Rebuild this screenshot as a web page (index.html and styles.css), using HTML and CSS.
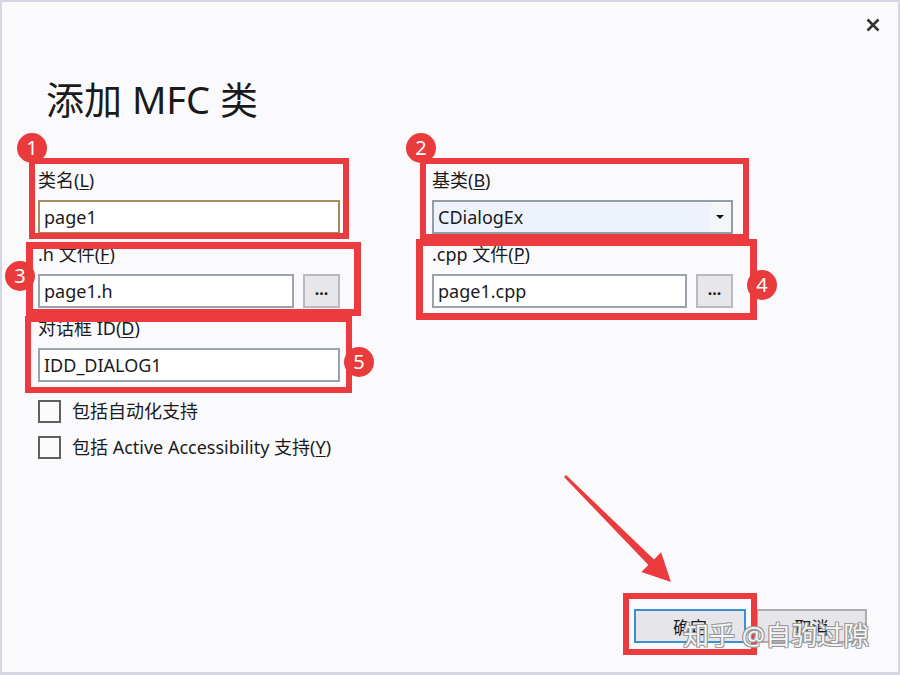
FILE: index.html
```html
<!DOCTYPE html>
<html lang="zh-CN">
<head>
    <meta charset="UTF-8">
    <title>添加 MFC 类</title>
    <link rel="stylesheet" href="styles.css">
</head>
<body>
    <div class="dialog">
        <div class="titlebar">
            <span class="close">
                <svg width="14" height="14" viewBox="0 0 14 14"><path d="M1.5 1.5 L12.5 12.5 M12.5 1.5 L1.5 12.5" stroke="#333" stroke-width="2.6" fill="none"/></svg>
            </span>
        </div>
        <h1 class="title">添加 MFC 类</h1>

        <div class="form">
            <div class="field">
                <label>类名(<u>L</u>)</label>
                <div class="input focused">page1</div>
            </div>
            <div class="field">
                <label>基类(<u>B</u>)</label>
                <div class="select">
                    <span class="select-value">CDialogEx</span>
                    <span class="select-arrow"></span>
                </div>
            </div>
            <div class="field">
                <label>.h 文件(<u>F</u>)</label>
                <div class="browse-row">
                    <div class="input">page1.h</div>
                    <div class="browse">...</div>
                </div>
            </div>
            <div class="field">
                <label>.cpp 文件(<u>P</u>)</label>
                <div class="browse-row">
                    <div class="input">page1.cpp</div>
                    <div class="browse">...</div>
                </div>
            </div>
            <div class="field">
                <label>对话框 ID(<u>D</u>)</label>
                <div class="input">IDD_DIALOG1</div>
            </div>
        </div>

        <div class="checks">
            <div class="check"><span class="box"></span><span>包括自动化支持</span></div>
            <div class="check"><span class="box"></span><span>包括 Active Accessibility 支持(<u>Y</u>)</span></div>
        </div>

        <div class="actions">
            <div class="btn primary">确定</div>
            <div class="btn cancel">取消</div>
        </div>

        <!-- annotations -->
        <div class="mark mark-1"></div>
        <div class="mark mark-2"></div>
        <div class="mark mark-3"></div>
        <div class="mark mark-4"></div>
        <div class="mark mark-5"></div>
        <div class="mark mark-6"></div>
        <div class="badge badge-1">1</div>
        <div class="badge badge-2">2</div>
        <div class="badge badge-3">3</div>
        <div class="badge badge-4">4</div>
        <div class="badge badge-5">5</div>
        <svg class="arrow" width="120" height="120" viewBox="0 0 120 120">
            <polygon points="4,7 6,5 94,89.4 101.1,82.3 111,112 81.3,102.1 88.4,95" fill="#ec3b3f"/>
        </svg>
        <div class="watermark">知乎 @自驹过隙</div>
    </div>
</body>
</html>
```

FILE: styles.css
```css
* {
    box-sizing: border-box;
}
body {
    margin: 0;
    background: #fafafc;
    font-family: "Noto Sans", "Noto Sans CJK SC", sans-serif;
    color: #1b1b1b;
}
.dialog {
    position: relative;
    width: 900px;
    height: 675px;
    border: 2px solid #d6d6e4;
    border-bottom-width: 3px;
    background: #fafafc;
    display: flex;
    flex-direction: column;
    padding: 0 30px 29px 36px;
}
.titlebar {
    height: 46px;
    display: flex;
    justify-content: flex-end;
    align-items: center;
    margin-right: -20px;
}
.close {
    display: block;
    width: 14px;
    height: 14px;
    margin-right: 8px;
}
.close svg {
    display: block;
}
.title {
    margin: 28px 0 0 8px;
    font-size: 38px;
    font-weight: 400;
    line-height: 46px;
    color: #1a1a1a;
}
.form {
    margin-top: 47px;
    display: grid;
    grid-template-columns: 302px 301px;
    column-gap: 92px;
    row-gap: 9px;
}
.field label {
    display: block;
    font-size: 18px;
    line-height: 22px;
    margin-bottom: 9px;
}
u {
    text-underline-offset: 2px;
    text-decoration-thickness: 1px;
}
.input {
    height: 34px;
    border: 2px solid #9aa3ad;
    background: #fff;
    padding: 0 4px;
    font-size: 18px;
    display: flex;
    align-items: center;
}
.input.focused {
    border-color: #a58c5c;
}
.select {
    height: 34px;
    border: 2px solid #939da8;
    background: #eef2fb;
    display: flex;
    align-items: stretch;
    font-size: 18px;
}
.select-value {
    flex: 1;
    display: flex;
    align-items: center;
    padding-left: 4px;
}
.select-arrow {
    width: 20px;
    background: #f5f6fa;
    position: relative;
}
.select-arrow::after {
    content: "";
    position: absolute;
    left: 5px;
    top: 13px;
    border-left: 4px solid transparent;
    border-right: 4px solid transparent;
    border-top: 4px solid #111;
}
.browse-row {
    display: flex;
    gap: 9px;
}
.browse-row .input {
    flex: 1;
}
.browse {
    width: 37px;
    height: 34px;
    border: 2px solid #b9b9bf;
    background: #e6e6eb;
    font-size: 16px;
    font-weight: 700;
    display: flex;
    align-items: center;
    justify-content: center;
    padding-bottom: 4px;
}
.checks {
    margin-top: 18px;
    display: flex;
    flex-direction: column;
    gap: 13px;
}
.check {
    display: flex;
    align-items: center;
    gap: 11px;
    font-size: 18px;
    line-height: 23px;
}
.box {
    width: 23px;
    height: 23px;
    border: 2px solid #606060;
    background: #fbfbfd;
}
.actions {
    margin-top: auto;
    display: flex;
    justify-content: flex-end;
    gap: 10px;
    margin-right: 1px;
}
.btn {
    height: 34px;
    width: 111px;
    background: #e6e6ea;
    border: 2px solid #adadad;
    font-size: 17px;
    display: flex;
    align-items: center;
    justify-content: center;
}
.btn.primary {
    width: 112px;
    border-color: #3a8fd0;
}
.mark {
    position: absolute;
    border: 6px solid #ec3b3f;
}
.mark-1 { left: 27px; top: 156px; width: 320px; height: 81px; }
.mark-2 { left: 418px; top: 156px; width: 329px; height: 82px; }
.mark-3 { left: 24px; top: 240px; width: 335px; height: 74px; border-width: 7px; }
.mark-4 { left: 414px; top: 237px; width: 341px; height: 81px; border-width: 7px; }
.mark-5 { left: 23px; top: 314px; width: 327px; height: 77px; }
.mark-6 { left: 621px; top: 591px; width: 134px; height: 62px; }
.badge {
    position: absolute;
    width: 30px;
    height: 30px;
    border-radius: 50%;
    background: #e93a3c;
    color: #fff;
    font-size: 20px;
    line-height: 30px;
    text-align: center;
}
.badge-1 { left: 15px; top: 131px; }
.badge-2 { left: 404px; top: 131px; }
.badge-3 { left: 3px; top: 259px; }
.badge-4 { left: 745px; top: 268px; }
.badge-5 { left: 342px; top: 345px; }
.arrow {
    position: absolute;
    left: 558px;
    top: 468px;
}
.watermark {
    position: absolute;
    left: 681px;
    top: 618px;
    font-size: 26px;
    line-height: 30px;
    color: rgba(255, 255, 255, 0.92);
    text-shadow: 1px 1px 0 #999, -1px -1px 0 #999, 1px -1px 0 #999, -1px 1px 0 #999;
}
```
